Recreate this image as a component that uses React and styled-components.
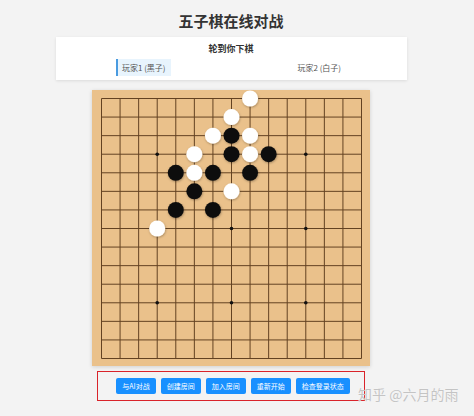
import React from 'react';
import styled, { createGlobalStyle } from 'styled-components';

const GlobalStyle = createGlobalStyle`
  body {
    margin: 0;
    background: #f3f3f3;
    font-family: "Noto Sans CJK SC", "Noto Sans", sans-serif;
  }
`;

const Page = styled.div`
  width: 462px;
  height: 416px;
  display: flex;
  flex-direction: column;
  align-items: center;
  padding-top: 11px;
  box-sizing: border-box;
  position: relative;
`;

const Title = styled.h1`
  margin: 0 0 6px 0;
  font-size: 15px;
  line-height: 20px;
  font-weight: 700;
  color: #333;
`;

const Card = styled.div`
  width: 351px;
  height: 43px;
  box-sizing: border-box;
  background: #fff;
  box-shadow: 0 1px 3px rgba(0, 0, 0, 0.1);
  padding-top: 6px;
  display: flex;
  flex-direction: column;
  gap: 5px;
`;

const Status = styled.div`
  text-align: center;
  font-size: 9px;
  line-height: 11px;
  font-weight: 700;
  color: #333;
`;

const Players = styled.div`
  display: flex;
  justify-content: space-around;
`;

const Player = styled.div`
  height: 17px;
  line-height: 17px;
  font-size: 8px;
  color: #555;
  padding: 0 5px 0 4px;
  border-left: 2px solid ${(p) => (p.$active ? '#4a9be0' : 'transparent')};
  background: ${(p) => (p.$active ? '#e8f4fd' : 'transparent')};
`;

const Board = styled.div`
  margin-top: 10px;
  width: 278px;
  height: 276px;
  box-sizing: border-box;
  padding: 7px 8px;
  background: #eac18b;
  box-shadow: 0 1px 4px rgba(0, 0, 0, 0.15);

  svg {
    overflow: visible;
    display: block;
  }
`;

const Controls = styled.div`
  margin-top: 5px;
  width: 268px;
  height: 30px;
  box-sizing: border-box;
  border: 1px solid #d9232a;
  display: flex;
  justify-content: center;
  align-items: center;
  gap: 5px;
  padding-left: 4px;
`;

const Button = styled.button`
  height: 16px;
  padding: 0 6px;
  border: none;
  border-radius: 2px;
  background: #1890ff;
  color: #fff;
  font-family: inherit;
  font-size: 7px;
  line-height: 16px;
  white-space: nowrap;
`;

const Watermark = styled.div`
  position: absolute;
  left: 358px;
  top: 384px;
  font-size: 14px;
  line-height: 20px;
  color: #c4c4c4;
  white-space: nowrap;
  text-shadow: 0 0 1px #fff;
`;

const SIZE = 15;
const CELL = 260 / 14;
const STARS = [3, 7, 11];

const whites = [[8, 0], [7, 1], [6, 2], [8, 2], [5, 3], [8, 3], [5, 4], [7, 5], [3, 7]];
const blacks = [[7, 2], [7, 3], [9, 3], [4, 4], [6, 4], [8, 4], [5, 5], [4, 6], [6, 6]];

const Grid = () => {
  const o = 1.5;
  const lines = [];
  for (let i = 0; i < SIZE; i++) {
    const p = o + i * CELL;
    lines.push(<line key={'h' + i} x1={o} y1={p} x2={o + 260} y2={p} />);
    lines.push(<line key={'v' + i} x1={p} y1={o} x2={p} y2={o + 260} />);
  }
  return (
    <svg width="263" height="263" viewBox="0 0 263 263">
      <defs>
        <filter id="sh" x="-30%" y="-30%" width="160%" height="160%">
          <feDropShadow dx="0.5" dy="1" stdDeviation="0.8" floodColor="#000" floodOpacity="0.3" />
        </filter>
      </defs>
      <g stroke="#634222" strokeWidth="1">{lines}</g>
      {STARS.map((x) =>
        STARS.map((y) => (
          <circle key={x + '-' + y} cx={o + x * CELL} cy={o + y * CELL} r="1.8" fill="#111" />
        ))
      )}
      {blacks.map(([x, y]) => (
        <circle key={'b' + x + y} cx={o + x * CELL} cy={o + y * CELL} r="8" fill="#0c0c0c" filter="url(#sh)" />
      ))}
      {whites.map(([x, y]) => (
        <circle key={'w' + x + y} cx={o + x * CELL} cy={o + y * CELL} r="8" fill="#fff" filter="url(#sh)" />
      ))}
    </svg>
  );
};

const App = () => {
  return (
    <Page>
      <GlobalStyle />
      <Title>五子棋在线对战</Title>
      <Card>
        <Status>轮到你下棋</Status>
        <Players>
          <Player $active>玩家1 (黑子)</Player>
          <Player>玩家2 (白子)</Player>
        </Players>
      </Card>
      <Board>
        <Grid />
      </Board>
      <Controls>
        <Button>与AI对战</Button>
        <Button>创建房间</Button>
        <Button>加入房间</Button>
        <Button>重新开始</Button>
        <Button>检查登录状态</Button>
      </Controls>
      <Watermark>知乎 @六月的雨</Watermark>
    </Page>
  );
};

export default App;
